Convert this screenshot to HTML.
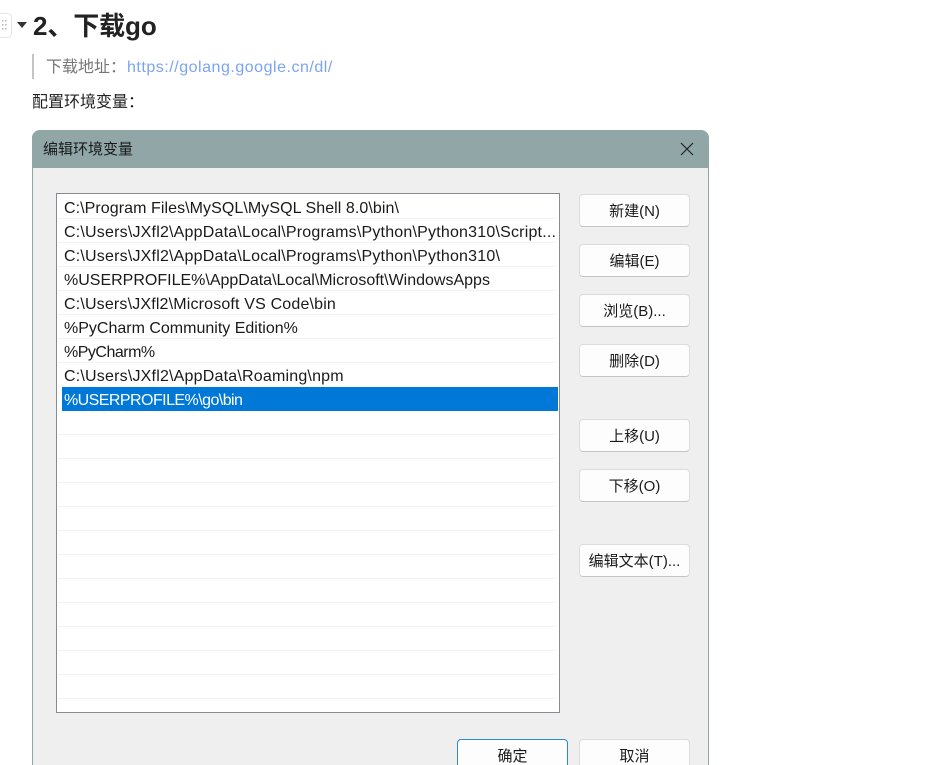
<!DOCTYPE html>
<html><head><meta charset="utf-8"><style>
html,body{margin:0;padding:0;width:941px;height:765px;overflow:hidden;background:#fff;font-family:"Liberation Sans","Noto Sans CJK SC",sans-serif}
div,span,a{position:absolute;white-space:nowrap;box-sizing:border-box}
#root{left:0;top:0;width:941px;height:765px;overflow:hidden;background:#fff}
.r{left:64px;font-size:16px;line-height:24px;height:24px;color:#1a1a1a}
.l{left:58px;width:499px;height:1px;background:#f4f4f4}
.b{left:579px;width:111px;height:33px;background:#fdfdfd;border:1px solid #dcdcdc;border-bottom-color:#c4c4c4;border-radius:4px;font-size:15px;line-height:33px;text-align:center;color:#1a1a1a}
</style></head><body>
<div id="root">
<div style="left:-12px;top:13px;width:24px;height:25px;border:1px solid #e4e4e4;border-radius:5px"></div>
<svg style="position:absolute;left:0;top:0" width="30" height="40"><g fill="#b5b5b5"><rect x="2" y="20" width="1.5" height="1.5"/><rect x="5" y="20" width="1.5" height="1.5"/><rect x="2" y="24" width="1.5" height="1.5"/><rect x="5" y="24" width="1.5" height="1.5"/><rect x="2" y="28" width="1.5" height="1.5"/><rect x="5" y="28" width="1.5" height="1.5"/></g><path d="M17 22h10l-5 6z" fill="#333"/></svg>
<div style="left:33px;top:8px;font-size:26px;line-height:36px;font-weight:bold;color:#222;letter-spacing:-.1px">2、下载go</div>
<div style="left:32px;top:54px;width:2px;height:25px;background:#c4c4c4"></div>
<div style="left:46px;top:57px;font-size:16px;line-height:22px;color:#777">下载地址：<span style="position:static;color:#7ba4f4;letter-spacing:.52px;margin-left:1px">https://golang.google.cn/dl/</span></div>
<div style="left:32px;top:92px;font-size:16px;line-height:22px;color:#222">配置环境变量：</div>

<div style="left:32px;top:130px;width:677px;height:660px;background:#efefef;border:1px solid #90a6a7;border-top:0;border-radius:8px 8px 0 0"></div>
<div style="left:32px;top:130px;width:677px;height:38px;background:#90a6a7;border-radius:8px 8px 0 0"></div>
<div style="left:43px;top:140px;font-size:15px;line-height:20px;color:#1a1a1a">编辑环境变量</div>
<svg style="position:absolute;left:680px;top:142px" width="14" height="14"><path d="M1 1L13 13M13 1L1 13" stroke="#222" stroke-width="1.2" fill="none"/></svg>

<div style="left:56px;top:193px;width:504px;height:520px;background:#fff;border:1px solid #8a8a92"></div>
<div class="l" style="top:218px"></div><div class="l" style="top:242px"></div><div class="l" style="top:266px"></div><div class="l" style="top:290px"></div><div class="l" style="top:314px"></div><div class="l" style="top:338px"></div><div class="l" style="top:362px"></div><div class="l" style="top:434px"></div><div class="l" style="top:458px"></div><div class="l" style="top:482px"></div><div class="l" style="top:506px"></div><div class="l" style="top:530px"></div><div class="l" style="top:554px"></div><div class="l" style="top:578px"></div><div class="l" style="top:602px"></div><div class="l" style="top:626px"></div><div class="l" style="top:650px"></div><div class="l" style="top:674px"></div><div class="l" style="top:698px"></div>
<div style="left:62px;top:387px;width:496px;height:24px;background:#0078d7"></div>
<div class="r" style="top:197px;letter-spacing:.07px">C:\Program Files\MySQL\MySQL Shell 8.0\bin\</div>
<div class="r" style="top:221px;letter-spacing:.2px">C:\Users\JXfl2\AppData\Local\Programs\Python\Python310\Script...</div>
<div class="r" style="top:245px;letter-spacing:.2px">C:\Users\JXfl2\AppData\Local\Programs\Python\Python310\</div>
<div class="r" style="top:269px">%USERPROFILE%\AppData\Local\Microsoft\WindowsApps</div>
<div class="r" style="top:293px;letter-spacing:.17px">C:\Users\JXfl2\Microsoft VS Code\bin</div>
<div class="r" style="top:317px">%PyCharm Community Edition%</div>
<div class="r" style="top:341px;letter-spacing:-.5px">%PyCharm%</div>
<div class="r" style="top:365px;letter-spacing:.2px">C:\Users\JXfl2\AppData\Roaming\npm</div>
<div class="r" style="top:389px;color:#fff;letter-spacing:-.55px">%USERPROFILE%\go\bin</div>

<div class="b" style="top:194px">新建(N)</div>
<div class="b" style="top:244px">编辑(E)</div>
<div class="b" style="top:294px">浏览(B)...</div>
<div class="b" style="top:344px">删除(D)</div>
<div class="b" style="top:419px">上移(U)</div>
<div class="b" style="top:469px">下移(O)</div>
<div class="b" style="top:544px">编辑文本(T)...</div>
<div class="b" style="left:457px;top:739px;border:1px solid #2a8ad8">确定</div>
<div class="b" style="top:739px">取消</div>
</div>
</body></html>
